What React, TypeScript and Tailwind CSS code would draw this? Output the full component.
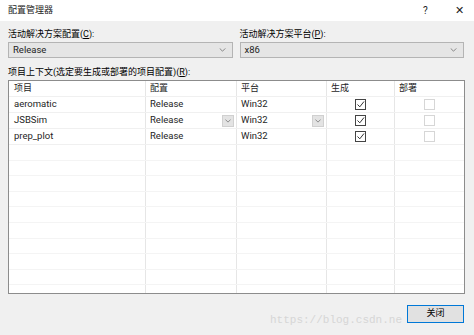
import React from 'react';

const font = { fontFamily: 'Roboto, "Noto Sans CJK SC", sans-serif' };

function Chevron({ className }: { className?: string }) {
  return (
    <svg viewBox="0 0 8 5" className={className} fill="none" stroke="#707070" strokeWidth="1">
      <path d="M0.5 0.5 L4 4 L7.5 0.5" />
    </svg>
  );
}

function Combo({ value }: { value: string }) {
  return (
    <div className="h-[16px] border border-[#b4b4b4] bg-[#e5e5e5] flex items-center pl-[4px] pr-[6px] text-[9.5px] text-[#1e1e1e]">
      <span className="flex-1 leading-none">{value}</span>
      <Chevron className="w-[7px] h-[4px]" />
    </div>
  );
}

function Check({ on }: { on: boolean }) {
  return (
    <div
      className={
        'w-[11px] h-[11px] border flex items-center justify-center bg-white ' +
        (on ? 'border-[#444444]' : 'border-[#d6d6d6]')
      }
    >
      {on && (
        <svg viewBox="0 0 9 9" className="w-[9px] h-[9px]" fill="none" stroke="#333" strokeWidth="1">
          <path d="M1.5 4.5 L3.8 6.8 L8 1.5" />
        </svg>
      )}
    </div>
  );
}

const rows = [
  { name: 'aeromatic', combo: false },
  { name: 'JSBSim', combo: true },
  { name: 'prep_plot', combo: false },
];

function CellDrop() {
  return (
    <div className="w-[12px] h-[12px] bg-[#e3e3e3] border border-[#d0d0d0] flex items-center justify-center mr-[2px]">
      <Chevron className="w-[6px] h-[4px]" />
    </div>
  );
}

const cols = 'grid grid-cols-[137px_91px_90px_68px_1fr]';

export default function App() {
  const cell = 'border-r border-[#e6e6e6] flex items-center';
  return (
    <div className="w-[474px] h-[335px] bg-[#f0f0f0] flex flex-col relative overflow-hidden text-black" style={font}>
      <div className="h-[21px] bg-white flex items-center pl-[8px] text-[9px] text-[#222]">
        <span className="flex-1">配置管理器</span>
        <span className="w-[10px] text-[10px] mr-[22px]">?</span>
        <span className="text-[11px] mr-[10px] leading-none">✕</span>
      </div>

      <div className="flex gap-[7px] pl-[8px] pr-[10px] mt-[5px]">
        <div className="flex-1 flex flex-col">
          <div className="h-[16px] text-[9px] leading-[16px]">活动解决方案配置(<span className="underline">C</span>):</div>
          <Combo value="Release" />
        </div>
        <div className="flex-1 flex flex-col">
          <div className="h-[16px] text-[9px] leading-[16px]">活动解决方案平台(<span className="underline">P</span>):</div>
          <Combo value="x86" />
        </div>
      </div>

      <div className="pl-[8px] mt-[6px] h-[16px] text-[9px] leading-[16px]">
        项目上下文(选定要生成或部署的项目配置)(<span className="underline">R</span>):
      </div>

      <div className="ml-[8px] mr-[9px] h-[214px] border border-[#8c8c8c] bg-white overflow-hidden text-[9.5px] text-[#1e1e1e]">
        <div className={cols + ' h-[16px] border-b border-[#f0f0f0] text-[9px]'}>
          <div className={cell + ' pl-[5px]'}>项目</div>
          <div className={cell + ' pl-[4px]'}>配置</div>
          <div className={cell + ' pl-[4px]'}>平台</div>
          <div className={cell + ' pl-[4px]'}>生成</div>
          <div className="flex items-center pl-[4px]">部署</div>
        </div>
        {rows.map((r) => (
          <div key={r.name} className={cols + ' h-[16px] border-b border-[#f0f0f0]'}>
            <div className={cell + ' pl-[5px]'}>{r.name}</div>
            <div className={cell + ' pl-[4px] justify-between'}>
              <span>Release</span>
              {r.combo && <CellDrop />}
            </div>
            <div className={cell + ' pl-[4px] justify-between'}>
              <span>Win32</span>
              {r.combo && <CellDrop />}
            </div>
            <div className={cell + ' justify-center'}>
              <Check on />
            </div>
            <div className="flex items-center justify-center">
              <Check on={false} />
            </div>
          </div>
        ))}
        {Array.from({ length: 11 }).map((_, i) => (
          <div key={i} className={cols + ' h-[15.6px] border-b border-[#f4f4f4]'}>
            <div className={cell} />
            <div className={cell} />
            <div className={cell} />
            <div className={cell} />
            <div />
          </div>
        ))}
      </div>

      <div className="flex justify-end pr-[10px] mt-[11px]">
        <button className="w-[57px] h-[18px] border border-[#0078d7] bg-[#e1e1e1] text-[9px] flex items-center justify-center relative z-10">
          关闭
        </button>
      </div>

      <div
        className="absolute left-[270px] top-[312px] text-[11px] text-[#d6d6d6]"
        style={{ fontFamily: '"Liberation Mono", monospace' }}
      >
        https://blog.csdn.ne
      </div>
    </div>
  );
}
